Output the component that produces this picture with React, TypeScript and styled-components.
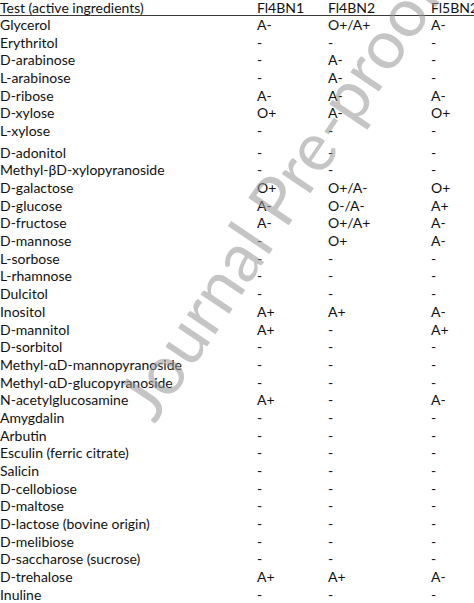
import React from 'react'
import styled, { createGlobalStyle } from 'styled-components'

const GlobalStyle = createGlobalStyle`
	html, body {
		margin: 0;
		padding: 0;
		background: #ffffff;
	}
	body {
		font-family: Lato, 'Open Sans', sans-serif;
		color: #111111;
		overflow: hidden;
	}
`

type Row = {
	test: string
	a: string
	b: string
	c: string
	spaced?: boolean
}

const rows: Row[] = [
	{ test: 'Glycerol', a: 'A-', b: 'O+/A+', c: 'A-' },
	{ test: 'Erythritol', a: '-', b: '-', c: '-' },
	{ test: 'D-arabinose', a: '-', b: 'A-', c: '-' },
	{ test: 'L-arabinose', a: '-', b: 'A-', c: '-' },
	{ test: 'D-ribose', a: 'A-', b: 'A-', c: 'A-' },
	{ test: 'D-xylose', a: 'O+', b: 'A-', c: 'O+' },
	{ test: 'L-xylose', a: '-', b: '-', c: '-' },
	{ test: 'D-adonitol', a: '-', b: '-', c: '-', spaced: true },
	{ test: 'Methyl-βD-xylopyranoside', a: '-', b: '-', c: '-' },
	{ test: 'D-galactose', a: 'O+', b: 'O+/A-', c: 'O+' },
	{ test: 'D-glucose', a: 'A-', b: 'O-/A-', c: 'A+' },
	{ test: 'D-fructose', a: 'A-', b: 'O+/A+', c: 'A-' },
	{ test: 'D-mannose', a: '-', b: 'O+', c: 'A-' },
	{ test: 'L-sorbose', a: '-', b: '-', c: '-' },
	{ test: 'L-rhamnose', a: '-', b: '-', c: '-' },
	{ test: 'Dulcitol', a: '-', b: '-', c: '-' },
	{ test: 'Inositol', a: 'A+', b: 'A+', c: 'A-' },
	{ test: 'D-mannitol', a: 'A+', b: '-', c: 'A+' },
	{ test: 'D-sorbitol', a: '-', b: '-', c: '-' },
	{ test: 'Methyl-αD-mannopyranoside', a: '-', b: '-', c: '-' },
	{ test: 'Methyl-αD-glucopyranoside', a: '-', b: '-', c: '-' },
	{ test: 'N-acetylglucosamine', a: 'A+', b: '-', c: 'A-' },
	{ test: 'Amygdalin', a: '-', b: '-', c: '-' },
	{ test: 'Arbutin', a: '-', b: '-', c: '-' },
	{ test: 'Esculin (ferric citrate)', a: '-', b: '-', c: '-' },
	{ test: 'Salicin', a: '-', b: '-', c: '-' },
	{ test: 'D-cellobiose', a: '-', b: '-', c: '-' },
	{ test: 'D-maltose', a: '-', b: '-', c: '-' },
	{ test: 'D-lactose (bovine origin)', a: '-', b: '-', c: '-' },
	{ test: 'D-melibiose', a: '-', b: '-', c: '-' },
	{ test: 'D-saccharose (sucrose)', a: '-', b: '-', c: '-' },
	{ test: 'D-trehalose', a: 'A+', b: 'A+', c: 'A-' },
	{ test: 'Inuline', a: '-', b: '-', c: '-' },
]

const Page = styled.div`
	position: relative;
	width: 474px;
	height: 603px;
	overflow: hidden;
`

const Table = styled.div`
	display: grid;
	grid-template-columns: 257px 71px 103px 1fr;
	font-size: 14px;
	line-height: 17.7px;
	white-space: nowrap;
`

const HeadCell = styled.div`
	height: 15px;
	line-height: 15px;
	border-bottom: 1px solid #3a3a3a;
`

const Cell = styled.div<{ $spaced?: boolean }>`
	height: ${({ $spaced }) => ($spaced ? '21.5px' : '17.7px')};
	line-height: ${({ $spaced }) => ($spaced ? '25px' : '17.7px')};
`

const Watermark = styled.div`
	position: absolute;
	left: 278px;
	top: 194px;
	transform: translate(-50%, -50%) rotate(-56deg);
	font-family: Lato, 'Open Sans', sans-serif;
	font-size: 68px;
	color: rgba(150, 150, 150, 0.55);
	white-space: nowrap;
	pointer-events: none;
`

export default function App() {
	return (
		<Page>
			<GlobalStyle />
			<Table>
				<HeadCell>Test (active ingredients)</HeadCell>
				<HeadCell>Fl4BN1</HeadCell>
				<HeadCell>Fl4BN2</HeadCell>
				<HeadCell>Fl5BN2</HeadCell>
				{rows.map((row) => (
					<React.Fragment key={row.test}>
						<Cell $spaced={row.spaced}>{row.test}</Cell>
						<Cell $spaced={row.spaced}>{row.a}</Cell>
						<Cell $spaced={row.spaced}>{row.b}</Cell>
						<Cell $spaced={row.spaced}>{row.c}</Cell>
					</React.Fragment>
				))}
			</Table>
			<Watermark>Journal Pre-proof</Watermark>
		</Page>
	)
}
